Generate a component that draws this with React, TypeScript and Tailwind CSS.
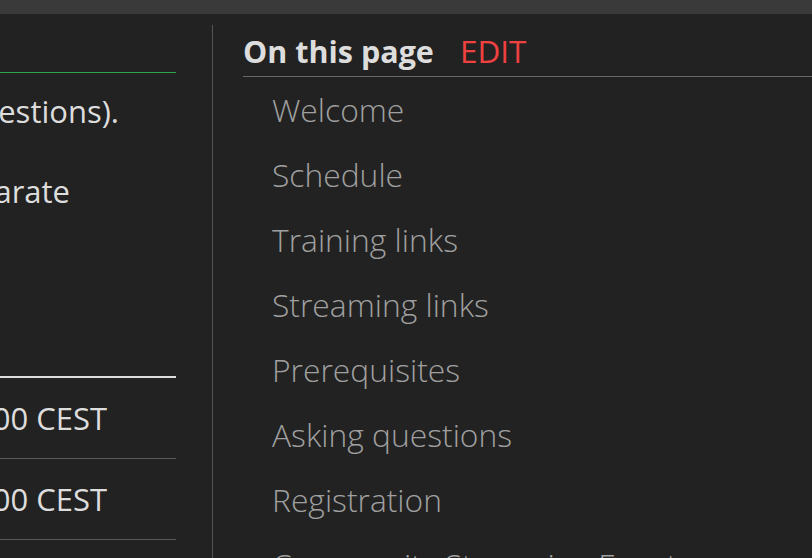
const tocItems = [
  'Welcome',
  'Schedule',
  'Training links',
  'Streaming links',
  'Prerequisites',
  'Asking questions',
  'Registration',
  'Community Streaming Event',
];

// A line of body text whose start is scrolled out of view to the left.
function ClippedLine({ end, children }: { end: string; children: React.ReactNode }) {
  return (
    <div className={`flex justify-end whitespace-nowrap ${end}`}>
      <span>{children}</span>
    </div>
  );
}

export default function App() {
  return (
    <div
      className="h-[558px] w-[812px] overflow-hidden bg-[#222222] text-[#dddddd]"
      style={{ fontFamily: '"Open Sans", "Noto Sans", sans-serif' }}
    >
      <div className="h-[14px] bg-[#3a3a3a]" />
      <div className="flex">
        {/* main content, mostly scrolled off to the left */}
        <div className="w-[176px] shrink-0 overflow-hidden pt-[58px] text-[31px] leading-[40px]">
          <div className="h-px bg-[#2ea44f]" />
          <ClippedLine end="w-[119px] mt-[18px]">asking any questions).</ClippedLine>
          <ClippedLine end="w-[70px] mt-[40px]">in a separate</ClippedLine>
          <div className="mt-[165px] h-[2px] bg-[#dddddd]" />
          <ClippedLine end="w-[107px] py-[20px]">09:00 - 12:00 CEST</ClippedLine>
          <div className="h-px bg-[#5a5a5a]" />
          <ClippedLine end="w-[107px] py-[20px]">13:00 - 16:00 CEST</ClippedLine>
          <div className="h-px bg-[#5a5a5a]" />
        </div>

        {/* on-this-page sidebar */}
        <div className="ml-[36px] mt-[11px] flex-1 border-l border-[#555555] pl-[30px]">
          <div className="flex items-baseline gap-[26px] border-b border-[#666666] pb-[5px] pt-[6px] leading-[40px]">
            <span className="text-[30.5px] font-bold text-[#dddddd]">On this page</span>
            <span className="text-[31.5px] text-[#f04141]">EDIT</span>
          </div>
          <ul className="pl-[29px]">
            {tocItems.map((item) => (
              <li key={item} className="h-[65px] whitespace-nowrap text-[31.8px] font-light leading-[65px] text-[#a0a0a0]">
                {item}
              </li>
            ))}
          </ul>
        </div>
      </div>
    </div>
  );
}
